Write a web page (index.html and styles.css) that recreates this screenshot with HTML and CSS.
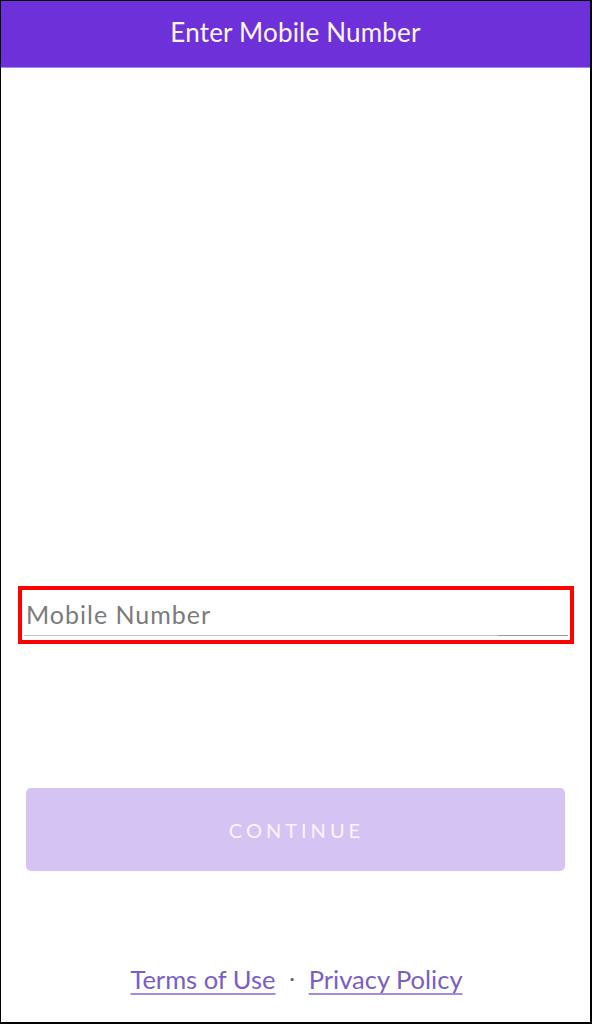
FILE: index.html
```html
<!DOCTYPE html>
<html>
<head>
<meta charset="utf-8">
<link rel="stylesheet" href="styles.css">
</head>
<body>
<div class="frame">
  <header class="topbar">
    <h1 class="title">Enter Mobile Number</h1>
  </header>
  <main class="content">
    <div class="highlight">
      <div class="field">
        <span class="placeholder">Mobile Number</span>
        <span class="underline"><span class="underline-end"></span></span>
      </div>
    </div>
    <button class="continue">CONTINUE</button>
    <footer class="links">
      <a class="link">Terms of Use</a>
      <span class="dot">·</span>
      <a class="link">Privacy Policy</a>
    </footer>
  </main>
</div>
</body>
</html>
```

FILE: styles.css
```css
html, body {
  margin: 0;
  padding: 0;
  background: #ffffff;
}
.frame {
  box-sizing: border-box;
  width: 592px;
  height: 1024px;
  border-style: solid;
  border-color: #000;
  border-width: 1px 2px 2px 1px;
  display: flex;
  flex-direction: column;
  font-family: Lato, "Noto Sans", sans-serif;
  background: #fff;
}
.topbar {
  height: 66px;
  background: #6e30d9;
  border-bottom: 1px solid #a489e6;
  display: flex;
  align-items: center;
  justify-content: center;
}
.title {
  margin: 0;
  color: #fdf6ff;
  font-weight: 400;
  font-size: 26px;
  letter-spacing: 0.2px;
  padding-bottom: 4px;
}
.content {
  flex: 1;
  display: flex;
  flex-direction: column;
  align-items: flex-start;
}
.highlight {
  box-sizing: border-box;
  margin-top: 518px;
  margin-left: 17px;
  width: 556px;
  height: 58px;
  border: 4px solid #ff0000;
  padding: 2px 2px 0 2px;
  display: flex;
}
.field {
  flex: 1;
  display: flex;
  flex-direction: column;
  justify-content: flex-end;
}
.placeholder {
  color: #7b7b7b;
  font-size: 25px;
  letter-spacing: 1px;
  padding-left: 2px;
  padding-bottom: 6px;
  line-height: 29px;
}
.underline {
  display: flex;
  justify-content: flex-end;
  height: 1px;
  background: #c4c4c4;
  margin-bottom: 4px;
}
.underline-end {
  width: 70px;
  background: #9a9a9a;
}
.continue {
  margin-top: 144px;
  margin-left: 25px;
  width: 539px;
  height: 83px;
  border: none;
  border-radius: 5px;
  background: #d5c3f4;
  color: #fbf4ff;
  font-family: Lato, "Noto Sans", sans-serif;
  font-size: 20px;
  letter-spacing: 4px;
  padding: 0 0 0 2px;
}
.links {
  margin-top: 93px;
  align-self: center;
  display: flex;
  align-items: center;
  gap: 12px;
  font-size: 25.5px;
  color: #7b5dc6;
  margin-left: 2px;
}
.link {
  text-decoration: underline;
  text-decoration-color: #a58be0;
  text-underline-offset: 4px;
  text-decoration-thickness: 2px;
}
.dot {
  color: #555;
  font-size: 20px;
  padding: 0 2px 4px;
}
```
